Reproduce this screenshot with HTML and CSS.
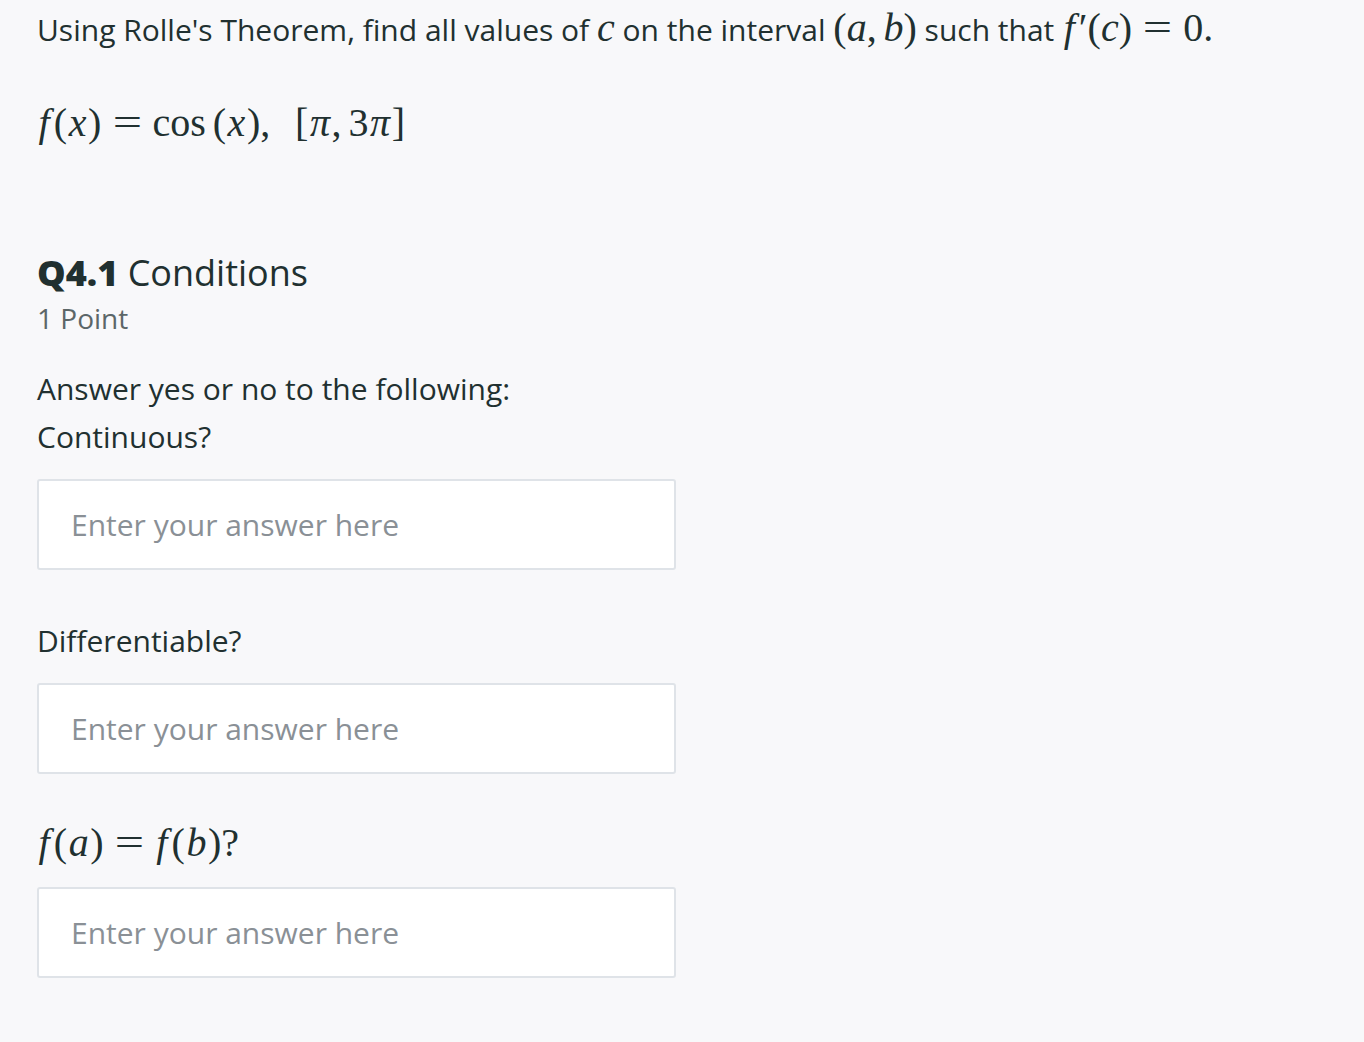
FILE: index.html
```html
<!DOCTYPE html>
<html>
<head>
<meta charset="utf-8">
<link rel="stylesheet" href="styles.css">
</head>
<body>
<main class="page">
  <p class="prompt">Using Rolle's Theorem, find all values of <span class="m"><i>c</i></span> on the interval <span class="m">(<i>a</i><span class="p">,</span><i>b</i>)</span> such that <span class="m"><i class="f">f</i>′(<i>c</i>)<span class="r">=</span>0.</span></p>
  <p class="formula"><span class="m"><i class="f">f</i>(<i class="v">x</i>)<span class="r">=</span><span class="op">cos</span>(<i class="v">x</i>)<span class="p">,</span><span class="q"></span>[<i class="v">π</i><span class="p">,</span>3<i class="v">π</i>]</span></p>

  <section class="question">
    <h2 class="q-title"><b>Q4.1</b> Conditions</h2>
    <div class="q-points">1 Point</div>
    <p class="q-text">Answer yes or no to the following:<br>Continuous?</p>
    <div class="answer">Enter your answer here</div>
    <p class="q-label">Differentiable?</p>
    <div class="answer">Enter your answer here</div>
    <p class="q-label"><span class="m"><i class="f">f</i>(<i class="v">a</i>)<span class="r">=</span><i class="f">f</i>(<i class="v">b</i>)?</span></p>
    <div class="answer">Enter your answer here</div>
  </section>
</main>
</body>
</html>
```
FILE: styles.css
```css
html, body {
  margin: 0;
  padding: 0;
  background: #f8f8fa;
}
.page {
  padding: 6px 0 0 37px;
  font-family: "Open Sans", Lato, sans-serif;
  color: #213030;
}
p { margin: 0; }
.prompt {
  font-size: 30px;
  line-height: 48px;
}
.m {
  font-family: "Liberation Serif", "DejaVu Serif", serif;
  font-size: 40px;
  line-height: 1;
  letter-spacing: 0;
}
.m i { font-style: italic; }
.m i.f { margin-right: 0.1em; margin-left: 0.04em; }
.m i.v { margin: 0 0.04em; }
.m .r {
  display: inline-block;
  width: 0.72em;
  margin: 0 0.28em;
  text-align: center;
  transform: scaleX(1.3);
}
.m .p { margin-right: 0.17em; }
.m .op { margin-right: 0.17em; }
.m .q { display: inline-block; width: 0.45em; }
.formula {
  margin-top: 47px;
  font-size: 30px;
  line-height: 48px;
}
.question { margin-top: 102px; }
.q-title {
  margin: 0;
  font-size: 36px;
  line-height: 44px;
  font-weight: 400;
}
.q-title b { font-weight: 800; }
.q-points {
  margin-top: 5px;
  font-size: 28px;
  line-height: 36px;
  color: #5c6668;
}
.q-text {
  margin-top: 29px;
  font-size: 30px;
  line-height: 48px;
}
.q-label {
  margin-top: 47px;
  font-size: 30px;
  line-height: 48px;
}
.answer {
  margin-top: 18px;
  box-sizing: border-box;
  width: 639px;
  height: 91px;
  background: #fff;
  border: 2px solid #dfe3e8;
  border-radius: 3px;
  padding: 0 32px;
  display: flex;
  align-items: center;
  font-size: 30px;
  color: #8a9096;
}
```
